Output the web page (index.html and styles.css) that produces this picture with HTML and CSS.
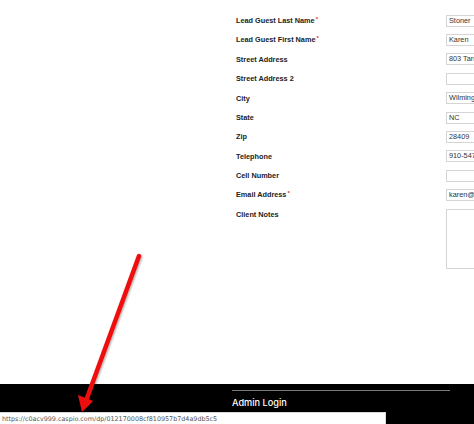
FILE: index.html
```html
<!DOCTYPE html>
<html>
<head>
<meta charset="utf-8">
<link rel="stylesheet" href="styles.css">
</head>
<body>
<main class="page">
  <form class="form">
    <div class="row"><span class="label">Lead Guest Last Name<span class="req">*</span></span><span class="field">Stoner</span></div>
    <div class="row"><span class="label">Lead Guest First Name<span class="req">*</span></span><span class="field">Karen</span></div>
    <div class="row"><span class="label">Street Address</span><span class="field">803 Tarr</span></div>
    <div class="row"><span class="label">Street Address 2</span><span class="field"></span></div>
    <div class="row"><span class="label">City</span><span class="field">Wilmington</span></div>
    <div class="row"><span class="label">State</span><span class="field">NC</span></div>
    <div class="row"><span class="label">Zip</span><span class="field">28409</span></div>
    <div class="row"><span class="label">Telephone</span><span class="field">910-547</span></div>
    <div class="row"><span class="label">Cell Number</span><span class="field"></span></div>
    <div class="row"><span class="label">Email Address<span class="req">*</span></span><span class="field">karen@</span></div>
    <div class="row row-top"><span class="label">Client Notes</span><span class="field area"></span></div>
  </form>
</main>
<footer class="footer">
  <div class="footer-inner">
    <div class="rule"></div>
    <div class="admin">Admin Login</div>
  </div>
</footer>
<div class="status">https://c0acv999.caspio.com/dp/012170008cf810957b7d4a9db5c5</div>
<svg class="arrow" width="474" height="424" viewBox="0 0 474 424">
  <defs>
    <filter id="sh" x="-20%" y="-20%" width="140%" height="140%">
      <feDropShadow dx="1" dy="1" stdDeviation="0.8" flood-color="#000" flood-opacity="0.35"/>
    </filter>
  </defs>
  <g filter="url(#sh)">
    <line x1="139" y1="256" x2="87" y2="398" stroke="#f01010" stroke-width="4.5" stroke-linecap="round"/>
    <polygon points="82,412 78,395 93,401" fill="#f01010"/>
  </g>
</svg>
</body>
</html>
```
FILE: styles.css
```css
html, body {
  margin: 0;
  padding: 0;
  background: #fff;
}
body {
  width: 474px;
  height: 424px;
  overflow: hidden;
  display: flex;
  flex-direction: column;
  font-family: "Liberation Sans", Arial, sans-serif;
  position: relative;
}
.page {
  flex: 1;
  overflow: hidden;
}
.form {
  margin: 0;
  padding: 11px 0 0 236px;
  display: flex;
  flex-direction: column;
}
.row {
  display: flex;
  align-items: center;
  height: 19.4px;
}
.row-top {
  align-items: flex-start;
  height: auto;
}
.label {
  width: 210px;
  flex-shrink: 0;
  font-weight: bold;
  font-size: 7.3px;
  color: #222;
  line-height: 19.4px;
}
.req {
  color: #e03030;
  font-size: 6px;
  margin-left: 1px;
  position: relative;
  top: -2px;
}
.field {
  box-sizing: border-box;
  width: 60px;
  height: 12px;
  border: 1px solid #d4d4d4;
  background: #fff;
  font-size: 7.3px;
  color: #333;
  line-height: 10px;
  padding-left: 2px;
  white-space: nowrap;
  overflow: hidden;
  flex-shrink: 0;
}
.area {
  height: 60px;
  margin-top: 4px;
}
.footer {
  height: 40px;
  background: #000;
  flex-shrink: 0;
}
.footer-inner {
  padding: 6px 0 0 232px;
  width: 218px;
}
.rule {
  height: 1px;
  background: #7a7a7a;
}
.admin {
  color: #fff;
  font-family: "Inter", "Noto Sans", sans-serif;
  font-size: 9.2px;
  font-weight: 500;
  margin-top: 6px;
}
.status {
  position: absolute;
  left: 0;
  bottom: 0;
  width: 386px;
  height: 12px;
  background: #fff;
  border-top: 1px solid #d8d8d8;
  border-right: 1px solid #d8d8d8;
  font-family: "DejaVu Sans", sans-serif;
  font-size: 6.4px;
  color: #555;
  line-height: 12px;
  padding-left: 2px;
  box-sizing: border-box;
  white-space: nowrap;
  overflow: hidden;
}
.arrow {
  position: absolute;
  left: 0;
  top: 0;
  pointer-events: none;
}
```
